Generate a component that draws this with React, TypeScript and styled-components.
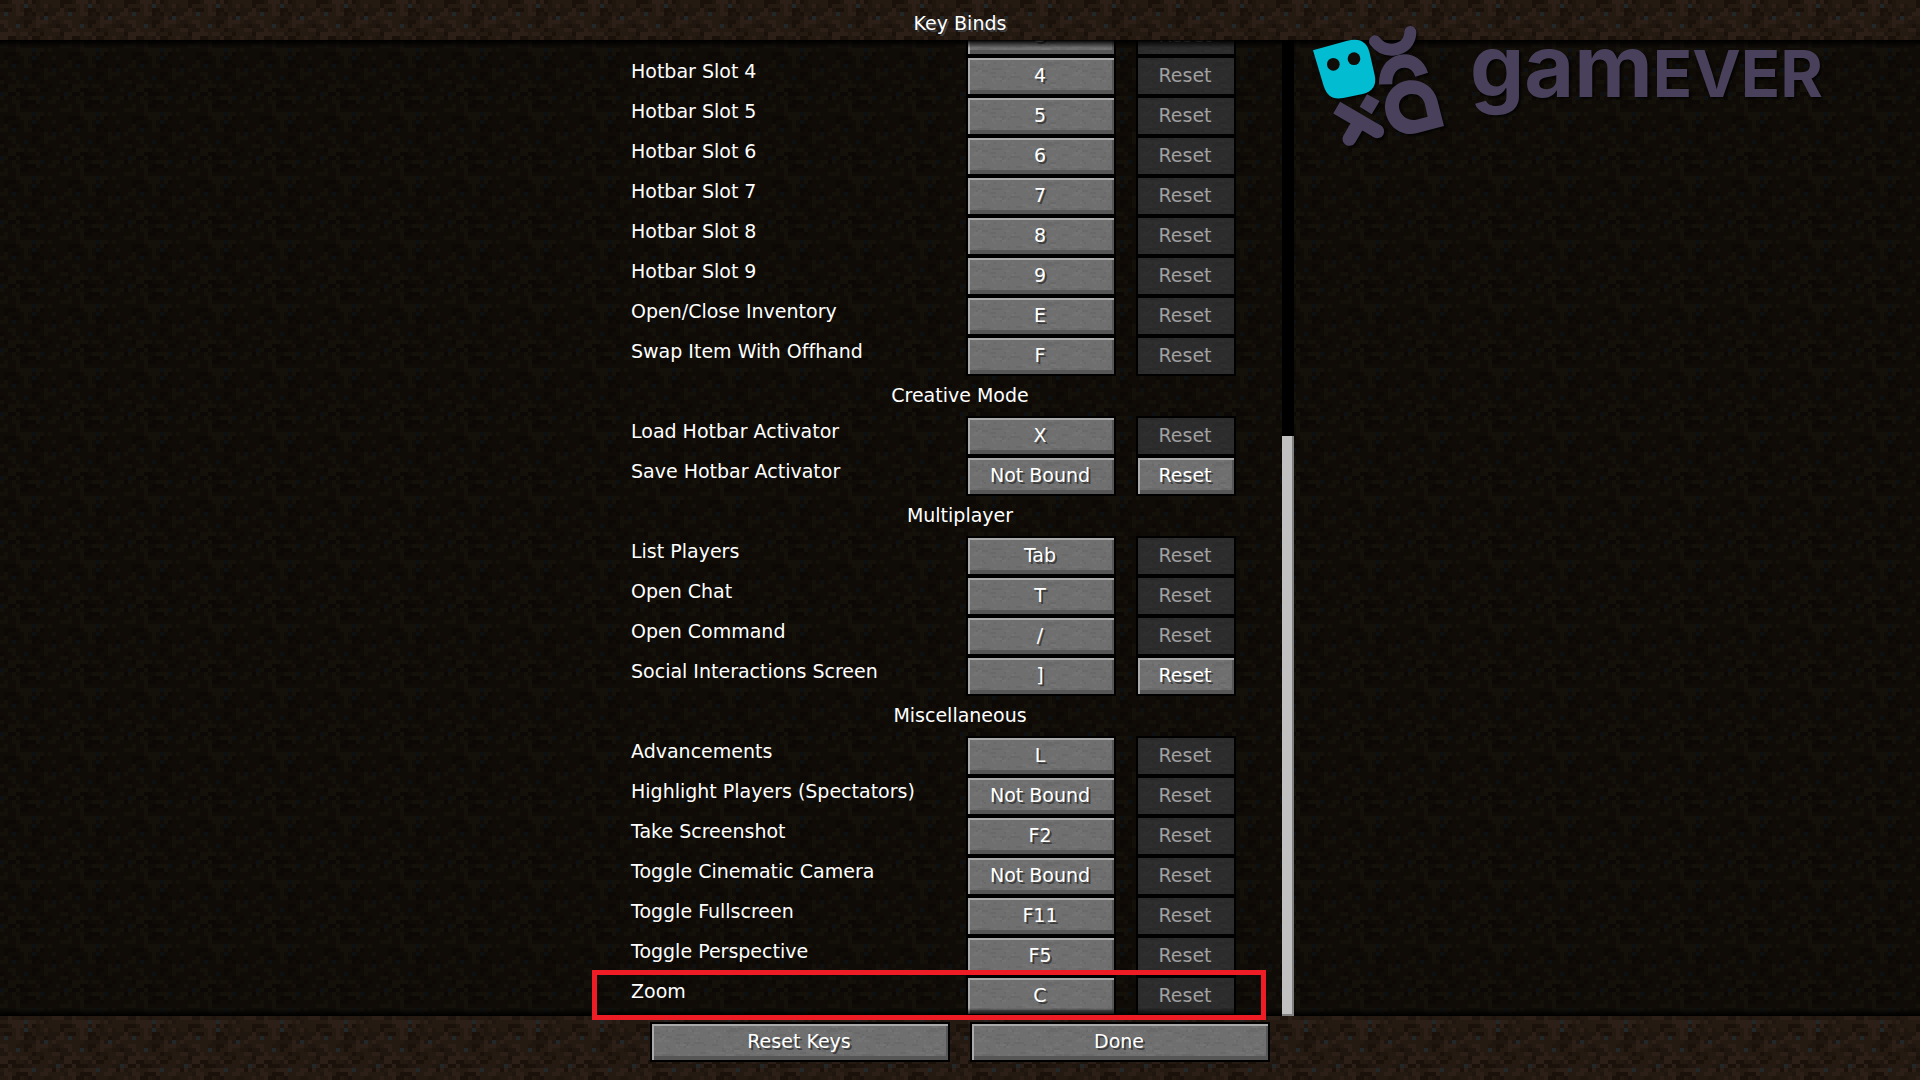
import React from "react";
import styled, { createGlobalStyle, css } from "styled-components";

/* ---------- textures ---------- */

const svgUrl = (svg: string) => `url("data:image/svg+xml,${encodeURIComponent(svg)}")`;

const makeRandom = (seed: number) => () => {
  seed = (seed * 1664525 + 1013904223) % 4294967296;
  return seed / 4294967296;
};

const pebbles = ["6,1", "1,3", "11,4", "4,6", "14,10", "8,11", "6,15"];

/* A 16 x 16 block of soil; each cell is drawn 4px wide. */
const dirt = (base: string, shades: string[], pebble: string) => {
  const random = makeRandom(77);
  let cells = "";
  for (let y = 0; y < 16; y++) {
    let x = 0;
    while (x < 16) {
      const run = random() < 0.4 ? 2 : 1;
      const roll = random();
      const shade = roll < 0.26 ? shades[0] : roll < 0.42 ? shades[1] : roll < 0.66 ? shades[2] : "";
      if (shade) {
        cells += `<rect x="${x * 4}" y="${y * 4}" width="${Math.min(run, 16 - x) * 4}" height="4" fill="${shade}"/>`;
      }
      x += run;
    }
  }
  pebbles.forEach((p) => {
    const [px, py] = p.split(",").map(Number);
    cells += `<rect x="${px * 4}" y="${py * 4}" width="4" height="4" fill="${pebble}"/>`;
  });
  return svgUrl(
    `<svg xmlns="http://www.w3.org/2000/svg" width="64" height="64" shape-rendering="crispEdges"><rect width="64" height="64" fill="${base}"/>${cells}</svg>`
  );
};

const stone = (base: string, light: string, dark: string) => {
  const random = makeRandom(19);
  let cells = "";
  for (let i = 0; i < 150; i++) {
    const x = Math.floor(random() * 50) * 2;
    const y = Math.floor(random() * 18) * 2;
    const w = random() < 0.5 ? 2 : 6;
    cells += `<rect x="${x}" y="${y}" width="${w}" height="2" fill="${random() < 0.5 ? light : dark}"/>`;
  }
  return svgUrl(
    `<svg xmlns="http://www.w3.org/2000/svg" width="100" height="36" shape-rendering="crispEdges"><rect width="100" height="36" fill="${base}"/>${cells}</svg>`
  );
};

const dirtBright = dirt("#241a12", ["#2c1f17", "#1a110a", "#1f170f"], "#22272a");
const dirtDark = dirt("#0f0c07", ["#14110b", "#0b0805", "#110b08"], "#0e1113");
const stoneActive = stone("#6f6f6f", "#747474", "#696969");
const stoneDisabled = stone("#2c2c2c", "#2f2f2f", "#292929");

/* ---------- styles ---------- */

const GlobalStyle = createGlobalStyle`
  * { box-sizing: border-box; }
  body { margin: 0; background: #000; }
`;

const Screen = styled.div`
  position: relative;
  display: flex;
  flex-direction: column;
  height: 100vh;
  overflow: hidden;
  color: #fff;
  font: 19px/24px "DejaVu Sans", Verdana, sans-serif;
  font-variant-ligatures: none;
  background: ${dirtBright};
`;

const Header = styled.header`
  display: flex;
  justify-content: center;
  flex: none;
  height: 40px;
  padding-top: 11px;
`;

const Title = styled.h1`
  margin: 0;
  font: inherit;
  text-shadow: 2px 2px #3e4043;
`;

const ListArea = styled.main`
  position: relative;
  display: flex;
  justify-content: center;
  flex: 1;
  min-height: 0;
  background: ${dirtDark} 8px 12px;

  &::before,
  &::after {
    content: "";
    position: absolute;
    left: 0;
    right: 0;
    height: 8px;
    pointer-events: none;
  }
  &::before {
    top: 0;
    background: linear-gradient(#000, transparent);
  }
  &::after {
    bottom: 0;
    background: linear-gradient(transparent, #000);
  }
`;

const ListFrame = styled.div`
  display: flex;
  width: 668px;
`;

const List = styled.div`
  display: flex;
  flex-direction: column;
  justify-content: flex-end;
  flex: 1;
  overflow: hidden;
`;

const Category = styled.h2`
  flex: none;
  height: 40px;
  margin: 0;
  padding: 7px 0 0 12px;
  font: inherit;
  text-align: center;
`;

const Row = styled.div`
  display: grid;
  grid-template-columns: 1fr 150px 100px;
  column-gap: 20px;
  flex: none;
  height: 40px;
  padding: 0 46px 0 5px;
`;

const RowLabel = styled.label<{ $scrolledOff?: boolean }>`
  padding-top: 3px;
  white-space: nowrap;
  visibility: ${(p) => (p.$scrolledOff ? "hidden" : "visible")};
`;

const GameButton = styled.button`
  height: 40px;
  margin: 0;
  padding: 0 4px 2px 2px;
  border: 2px solid #000;
  border-radius: 0;
  font: inherit;
  color: #fff;
  text-shadow: 2px 2px #3c3c3c;
  background: ${stoneActive};
  box-shadow: inset 2px 2px #a9a9a9, inset -2px -4px #565656;

  ${(p) =>
    p.disabled &&
    css`
      color: #a0a0a0;
      text-shadow: none;
      background: ${stoneDisabled};
      box-shadow: none;
    `}
`;

const ScrollTrack = styled.div`
  position: relative;
  z-index: 1;
  display: flex;
  flex-direction: column;
  justify-content: flex-end;
  width: 12px;
  background: #000;
`;

const ScrollThumb = styled.div`
  height: 59.4%;
  background: #c0c0c0;
  box-shadow: inset -2px -2px #808080;
`;

const Highlight = styled.div`
  position: absolute;
  z-index: 1;
  bottom: -4px;
  left: calc(50% - 368px);
  width: 674px;
  height: 50px;
  border: 5px solid #ee1c24;
  pointer-events: none;
`;

const Footer = styled.footer`
  display: flex;
  justify-content: center;
  gap: 20px;
  flex: none;
  height: 64px;
  padding-top: 6px;
`;

const FooterButton = styled(GameButton)`
  width: 300px;
`;

const Watermark = styled.div`
  position: absolute;
  z-index: 2;
  top: 20px;
  right: 68px;
  display: flex;
  gap: 20px;
  width: 552px;
  color: #49415c;
  filter: drop-shadow(2px 2px 1px rgba(0, 0, 0, 0.7));
  pointer-events: none;
`;

const Mark = styled.svg`
  flex: none;
  width: 150px;
  height: 130px;
`;

const Wordmark = styled.span`
  font: 700 65px/108px Inter, sans-serif;
  white-space: nowrap;
`;

const WordmarkLead = styled.span`
  font-size: 86px;
  line-height: 60px;
`;

/* ---------- data ---------- */

type Bind = { name: string; value: string; changed?: boolean; scrolledOff?: boolean };
type Group = { title?: string; binds: Bind[] };

const groups: Group[] = [
  {
    binds: [
      { name: "Hotbar Slot 3", value: "3", scrolledOff: true },
      { name: "Hotbar Slot 4", value: "4" },
      { name: "Hotbar Slot 5", value: "5" },
      { name: "Hotbar Slot 6", value: "6" },
      { name: "Hotbar Slot 7", value: "7" },
      { name: "Hotbar Slot 8", value: "8" },
      { name: "Hotbar Slot 9", value: "9" },
      { name: "Open/Close Inventory", value: "E" },
      { name: "Swap Item With Offhand", value: "F" },
    ],
  },
  {
    title: "Creative Mode",
    binds: [
      { name: "Load Hotbar Activator", value: "X" },
      { name: "Save Hotbar Activator", value: "Not Bound", changed: true },
    ],
  },
  {
    title: "Multiplayer",
    binds: [
      { name: "List Players", value: "Tab" },
      { name: "Open Chat", value: "T" },
      { name: "Open Command", value: "/" },
      { name: "Social Interactions Screen", value: "]", changed: true },
    ],
  },
  {
    title: "Miscellaneous",
    binds: [
      { name: "Advancements", value: "L" },
      { name: "Highlight Players (Spectators)", value: "Not Bound" },
      { name: "Take Screenshot", value: "F2" },
      { name: "Toggle Cinematic Camera", value: "Not Bound" },
      { name: "Toggle Fullscreen", value: "F11" },
      { name: "Toggle Perspective", value: "F5" },
      { name: "Zoom", value: "C" },
    ],
  },
];

/* ---------- components ---------- */

function BindRow({ name, value, changed, scrolledOff }: Bind) {
  const id = name.toLowerCase().replace(/[^a-z0-9]+/g, "-");
  return (
    <Row>
      <RowLabel htmlFor={id} $scrolledOff={scrolledOff}>{name}</RowLabel>
      <GameButton id={id} type="button">{value}</GameButton>
      <GameButton type="button" disabled={!changed}>Reset</GameButton>
    </Row>
  );
}

function Logo() {
  return (
    <Watermark>
      <Mark viewBox="0 0 450 390" fill="currentColor" aria-hidden="true">
        <path
          d="M39 91L142 62C182 53 201 67 209 99L224 165C231 197 217 215 188 222L130 234C98 240 80 227 71 198Z"
          fill="#02bcd2"
        />
        <circle cx="100" cy="133" r="19" fill="#100d08" />
        <circle cx="162" cy="116" r="19" fill="#100d08" />
        <g fill="none" stroke="currentColor">
          <path d="M225 64C238 82 256 90 278 89C312 86 330 66 331 36" strokeWidth="36" strokeLinecap="round" />
          <path d="M257 193C256 158 273 130 303 124C333 119 356 136 365 164" strokeWidth="40" />
          <path d="M110 263L232 334" strokeWidth="41" />
          <path d="M231 333.500L232 334M178 306L148 357" strokeWidth="41" strokeLinecap="round" />
        </g>
        <path
          fillRule="evenodd"
          d="M432 318L349 340C303 350 263 320 256 272C250 226 280 189 320 182C362 176 401 199 412 240ZM383 290L374 250C368 232 355 222 335 222C311 223 295 240 297 262C300 288 325 304 349 299Z"
        />
        <path d="M201 223L239 243L215 283L179 260Z" />
      </Mark>
      <Wordmark>
        <WordmarkLead>gam</WordmarkLead>EVER
      </Wordmark>
    </Watermark>
  );
}

export default function App() {
  return (
    <Screen>
      <GlobalStyle />
      <Header>
        <Title>Key Binds</Title>
      </Header>
      <ListArea>
        <ListFrame>
          <List>
            {groups.map((group, i) => (
              <React.Fragment key={i}>
                {group.title && <Category>{group.title}</Category>}
                {group.binds.map((bind) => (
                  <BindRow key={bind.name} {...bind} />
                ))}
              </React.Fragment>
            ))}
          </List>
          <ScrollTrack>
            <ScrollThumb />
          </ScrollTrack>
        </ListFrame>
        <Highlight />
      </ListArea>
      <Footer>
        <FooterButton type="button">Reset Keys</FooterButton>
        <FooterButton type="button">Done</FooterButton>
      </Footer>
      <Logo />
    </Screen>
  );
}
